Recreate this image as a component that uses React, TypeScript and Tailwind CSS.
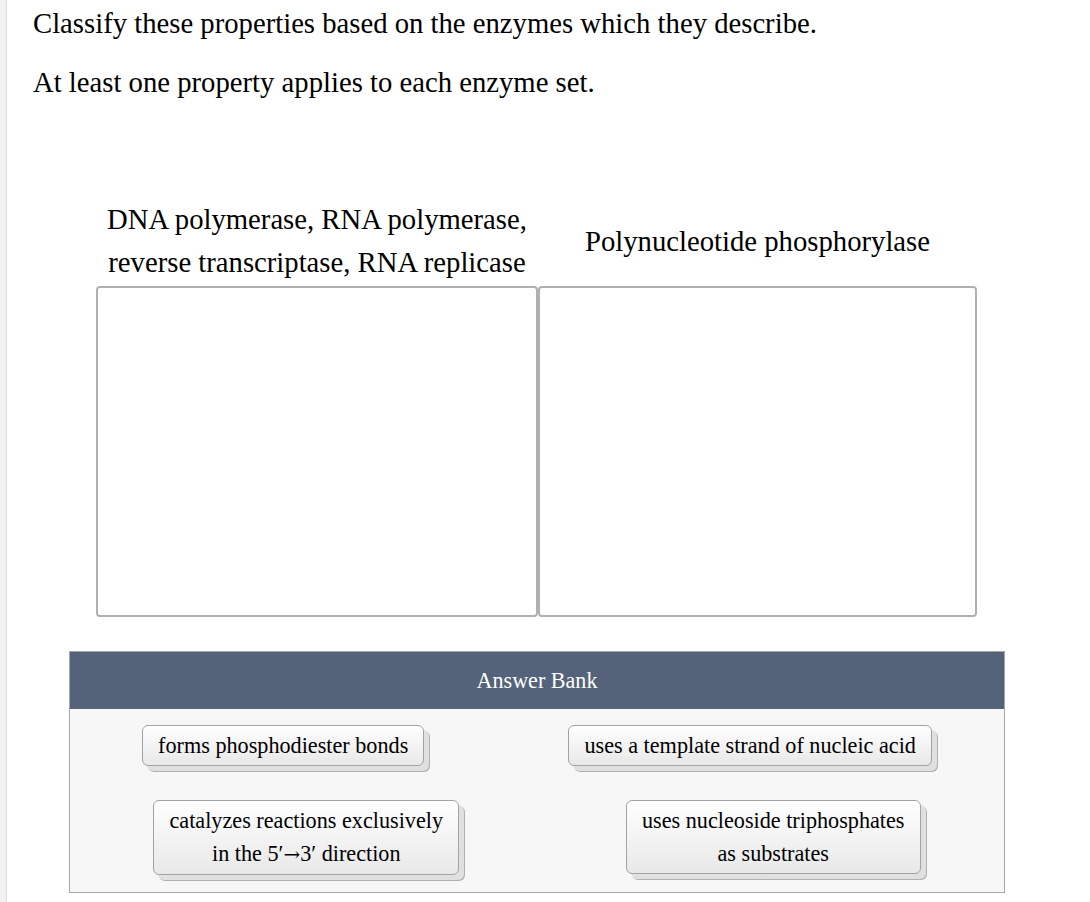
import React from "react";

const serif = { fontFamily: '"Liberation Serif", "Times New Roman", serif' };

type Card = { lines: React.ReactNode[] };

const arrow = (
  <span className="text-[20px]" style={{ fontFamily: '"DejaVu Serif", "Liberation Serif", serif' }}>
    {"\u2192"}
  </span>
);

const rows: Card[][] = [
  [
    { lines: ["forms phosphodiester bonds"] },
    { lines: ["uses a template strand of nucleic acid"] },
  ],
  [
    {
      lines: [
        "catalyzes reactions exclusively",
        <>
          in the 5{"\u2032"}
          {arrow}3{"\u2032"} direction
        </>,
      ],
    },
    { lines: ["uses nucleoside triphosphates", "as substrates"] },
  ],
];

function AnswerCard({ card }: { card: Card }) {
  return (
    <div className="rounded-[6px] border border-[#a3a3a3] bg-gradient-to-b from-white to-[#e8e8e8] px-[15px] py-[3px] text-center text-[22.2px] leading-[33px] text-black shadow-[5px_5px_0_0_#e0e0e0,6px_6px_0_0_#b0b0b0] whitespace-nowrap">
      {card.lines.map((l, i) => (
        <div key={i}>{l}</div>
      ))}
    </div>
  );
}

export default function App() {
  return (
    <div className="flex min-h-[902px] w-full bg-white" style={serif}>
      <div className="w-[6px] shrink-0 border-r border-[#dcdcdc] bg-[#f2f2f2] box-content" />
      <div className="flex-1">
        <p className="mt-[2px] pl-[26px] text-[28.7px] leading-[43px] text-black">
          Classify these properties based on the enzymes which they describe.
        </p>
        <p className="mt-[16px] pl-[26px] text-[28.7px] leading-[43px] text-black">
          At least one property applies to each enzyme set.
        </p>

        <div className="ml-[89px] mt-[94px] grid w-[881px] grid-cols-[442px_439px]">
          <div className="flex h-[86px] items-center justify-center text-center text-[28.7px] leading-[43px] text-black">
            <div>
              DNA polymerase, RNA polymerase,
              <br />
              reverse transcriptase, RNA replicase
            </div>
          </div>
          <div className="flex h-[86px] items-center justify-center text-center text-[28.7px] leading-[43px] text-black">
            Polynucleotide phosphorylase
          </div>
          <div className="mt-[2px] h-[331px] rounded-[4px] border-2 border-[#b0b0b0] bg-white" />
          <div className="mt-[2px] h-[331px] rounded-[4px] border-2 border-[#b0b0b0] bg-white" />
        </div>

        <div className="ml-[62px] mt-[34px] w-[936px] border border-[#a6a6a6] bg-[#f7f7f7]">
          <div className="flex h-[57px] items-center justify-center bg-[#546379] text-[22.1px] text-white">
            Answer Bank
          </div>
          <div className="flex flex-col gap-[34px] pb-[17px] pt-[16px]">
            {rows.map((row, ri) => (
              <div key={ri} className="flex items-start justify-around">
                {row.map((c, ci) => (
                  <AnswerCard key={ci} card={c} />
                ))}
              </div>
            ))}
          </div>
        </div>
      </div>
    </div>
  );
}
